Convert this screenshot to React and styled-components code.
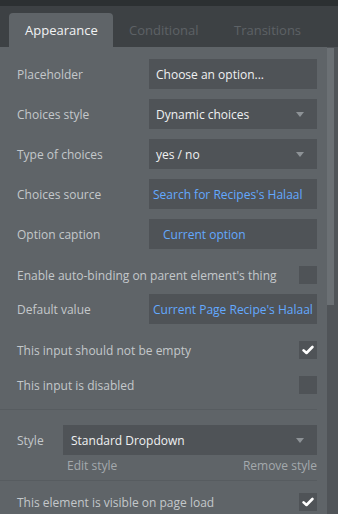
import React from 'react';
import styled, { createGlobalStyle } from 'styled-components';

const GlobalStyle = createGlobalStyle`
  html, body {
    margin: 0;
    padding: 0;
    background: #5f6468;
  }
  body {
    font-family: 'Open Sans', 'Liberation Sans', sans-serif;
    font-size: 12px;
  }
`;

const Frame = styled.div`
  width: 338px;
  height: 514px;
  overflow: hidden;
  display: flex;
  flex-direction: column;
  background: #5f6468;
`;

const TopStrip = styled.div`
  height: 6px;
  background: #2c3032;
  flex-shrink: 0;
`;

const TabBar = styled.div`
  height: 41px;
  background: #3d4144;
  display: flex;
  align-items: flex-end;
  padding-left: 9px;
  flex-shrink: 0;
`;

const Tab = styled.div`
  height: 34px;
  width: ${(p) => p.$w}px;
  box-sizing: border-box;
  padding-left: 16px;
  display: flex;
  align-items: center;
  border-radius: 4px 4px 0 0;
  font-size: 13px;
  background: ${(p) => (p.$active ? '#5f6468' : 'transparent')};
  color: ${(p) => (p.$active ? '#f2f3f4' : '#5d6266')};
`;

const Body = styled.div`
  flex: 1;
  display: flex;
  min-height: 0;
`;

const Content = styled.div`
  flex: 1;
  display: flex;
  flex-direction: column;
  padding-right: 10px;
`;

const Section = styled.div`
  display: flex;
  flex-direction: column;
  gap: 10px;
  padding: ${(p) => p.$pad};
  border-bottom: ${(p) => (p.$line ? '1px solid #575c60' : 'none')};
`;

const Row = styled.div`
  display: flex;
  align-items: center;
  justify-content: space-between;
  padding-left: 17px;
  height: ${(p) => p.$h || 30}px;
  margin-top: ${(p) => p.$mt || 0}px;
`;

const Label = styled.span`
  color: #c4c8cb;
  white-space: nowrap;
`;

const Field = styled.div`
  width: ${(p) => p.$w || 168}px;
  height: 30px;
  box-sizing: border-box;
  background: #4f5357;
  display: flex;
  align-items: center;
  justify-content: space-between;
  padding-left: ${(p) => p.$indent || 7}px;
  padding-right: 13px;
  color: ${(p) => (p.$dynamic ? '#63a9ff' : '#f0f1f2')};
  white-space: nowrap;
  overflow: hidden;
`;

const Caret = styled.span`
  width: 0;
  height: 0;
  border-left: 4px solid transparent;
  border-right: 4px solid transparent;
  border-top: 5px solid #8d9296;
`;

const Box = styled.div`
  width: 18px;
  height: 18px;
  background: #4f5357;
  display: flex;
  align-items: center;
  justify-content: center;
`;

const Links = styled.div`
  display: flex;
  justify-content: space-between;
  margin-left: 67px;
  margin-top: -9px;
  color: #a4a9ad;
  height: 18px;
  align-items: center;
`;

const ScrollTrack = styled.div`
  width: 11px;
  display: flex;
  background: #505458;
`;

const Thumb = styled.div`
  width: 7px;
  height: 257px;
  margin-top: 1px;
  background: #6b7074;
`;

const Check = () => (
  <svg width="12" height="10" viewBox="0 0 12 10">
    <path d="M1.6 5.4 L4.5 8 L10.4 2" fill="none" stroke="#ffffff" strokeWidth="2.6" strokeLinecap="round" strokeLinejoin="round" />
  </svg>
);

const CheckBox = ({ checked }) => <Box>{checked && <Check />}</Box>;

const FieldRow = ({ label, children, ...rest }) => (
  <Row>
    <Label>{label}</Label>
    <Field {...rest}>{children}</Field>
  </Row>
);

const CheckRow = ({ label, checked }) => (
  <Row $h={18} $mt={7}>
    <Label>{label}</Label>
    <CheckBox checked={checked} />
  </Row>
);

export default function App() {
  return (
    <>
      <GlobalStyle />
      <Frame>
        <TopStrip />
        <TabBar>
          <Tab $active $w={104}>Appearance</Tab>
          <Tab $w={105}>Conditional</Tab>
          <Tab $w={104}>Transitions</Tab>
        </TabBar>
        <Body>
          <Content>
            <Section $pad="12px 0 15px" $line>
              <FieldRow label="Placeholder">Choose an option...</FieldRow>
              <FieldRow label="Choices style">
                Dynamic choices
                <Caret />
              </FieldRow>
              <FieldRow label="Type of choices">
                yes / no
                <Caret />
              </FieldRow>
              <FieldRow label="Choices source" $dynamic $indent={4}>
                Search for Recipes's Halaal
              </FieldRow>
              <FieldRow label="Option caption" $dynamic $indent={14}>
                Current option
              </FieldRow>
              <CheckRow label="Enable auto-binding on parent element's thing" />
              <FieldRow label="Default value" $dynamic $indent={4}>
                Current Page Recipe's Halaal
              </FieldRow>
              <CheckRow label="This input should not be empty" checked />
              <CheckRow label="This input is disabled" />
            </Section>
            <Section $pad="15px 0 6px" $line>
              <Row>
                <Label>Style</Label>
                <Field $w={254} $indent={8}>
                  Standard Dropdown
                  <Caret />
                </Field>
              </Row>
              <Links>
                <span>Edit style</span>
                <span>Remove style</span>
              </Links>
            </Section>
            <Section $pad="12px 0 0">
              <Row $h={18}>
                <Label>This element is visible on page load</Label>
                <CheckBox checked />
              </Row>
            </Section>
          </Content>
          <ScrollTrack>
            <Thumb />
          </ScrollTrack>
        </Body>
      </Frame>
    </>
  );
}
